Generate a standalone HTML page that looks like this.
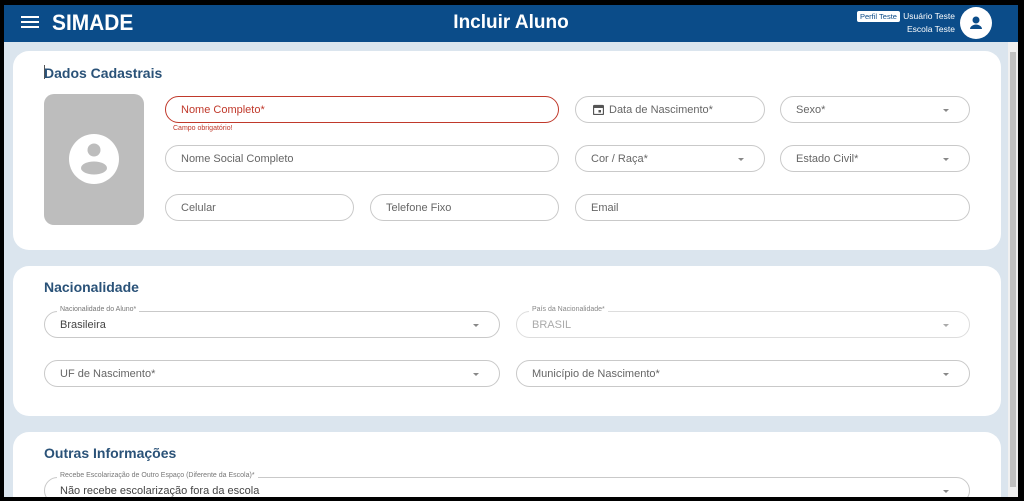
<!DOCTYPE html>
<html><head><meta charset="utf-8"><style>
*{box-sizing:border-box;margin:0;padding:0}
body{width:1024px;height:501px;background:#000;position:relative;overflow:hidden;font-family:"Liberation Sans",sans-serif}
#app{position:absolute;left:4px;top:5px;width:1014px;height:492px;background:#dbe5ee;overflow:hidden}
#hdr{position:absolute;left:0;top:0;width:1014px;height:37px;background:#0b4c89;color:#fff}
.card{position:absolute;left:9px;width:988px;background:#fff;border-radius:16px}
.t{position:absolute;font-size:14px;font-weight:bold;color:#2a5278}
.f{position:absolute;height:27px;border:1px solid #c9c9c9;border-radius:14px;font-size:11px;color:#666;padding-left:15px;line-height:26px}
.f .a{position:absolute;right:20px;top:12px;width:0;height:0;border-left:3px solid transparent;border-right:3px solid transparent;border-top:3px solid #888}
.lg{position:absolute;top:-7px;left:12px;background:#fff;padding:0 3px;font-size:7px;line-height:10px;color:#777}
.v{line-height:27px;font-size:11px;color:#444}
</style></head><body>
<div id="app">
<div id="hdr">
 <div style="position:absolute;left:17px;top:11px;width:18px;height:2px;background:#fff;box-shadow:0 5px 0 #fff,0 10px 0 #fff"></div>
 <div style="position:absolute;left:48px;top:5px;font-size:22px;font-weight:bold;transform:scaleX(0.95);transform-origin:left">SIMADE</div>
 <div style="position:absolute;left:0;width:1014px;text-align:center;top:7px;font-size:19px;font-weight:bold">Incluir Aluno</div>
 <div style="position:absolute;left:853px;top:6px;background:#fff;color:#0b4c89;font-size:7.5px;padding:1px 3px;border-radius:2px">Perfil Teste</div>
 <div style="position:absolute;right:63px;top:5px;font-size:8.5px;text-align:right;line-height:13px">Usuário Teste<br>Escola Teste</div>
 <div style="position:absolute;left:956px;top:2px;width:32px;height:32px;border-radius:50%;background:#fff">
  <svg width="32" height="32" viewBox="0 0 32 32"><circle cx="16" cy="13" r="3.5" fill="#0b4c89"/><path d="M10 22c0-3 4-4.5 6-4.5s6 1.5 6 4.5z" fill="#0b4c89"/></svg></div>
</div>
<div style="position:absolute;left:1004px;top:37px;width:10px;height:455px;background:#f0f0f0"><div style="position:absolute;left:2px;top:10px;width:6px;height:435px;background:#c1c1c1"></div></div>

<div class="card" style="top:46px;height:199px">
 <div style="position:absolute;left:31px;top:14px;width:1px;height:14px;background:#555"></div>
 <div class="t" style="left:31px;top:14px">Dados Cadastrais</div>
 <div style="position:absolute;left:31px;top:43px;width:100px;height:131px;background:#bdbdbd;border-radius:10px">
  <svg width="100" height="131" viewBox="0 0 100 131" style="position:absolute;left:0;top:0"><circle cx="50" cy="65" r="25" fill="#fff"/><circle cx="50" cy="56" r="6.5" fill="#bdbdbd"/><ellipse cx="50" cy="74" rx="13" ry="6.5" fill="#bdbdbd"/></svg></div>
 <div class="f" style="left:152px;top:45px;width:394px;border:1.5px solid #c0392b;color:#c0392b">Nome Completo*</div>
 <div style="position:absolute;left:160px;top:74px;font-size:7px;color:#c0392b">Campo obrigatório!</div>
 <div class="f" style="left:562px;top:45px;width:190px;padding-left:16px"><svg width="11" height="11" viewBox="0 0 11 11" style="position:absolute;left:17px;top:7px"><rect x="0.5" y="1.5" width="10" height="9" rx="1" fill="none" stroke="#555" stroke-width="1.3"/><rect x="0.5" y="1.5" width="10" height="2.5" fill="#555"/><rect x="5.5" y="6" width="2.5" height="2.5" fill="#555"/></svg><span style="padding-left:17px">Data de Nascimento*</span></div>
 <div class="f" style="left:767px;top:45px;width:190px">Sexo*<i class="a"></i></div>
 <div class="f" style="left:152px;top:94px;width:394px">Nome Social Completo</div>
 <div class="f" style="left:562px;top:94px;width:190px">Cor / Raça*<i class="a"></i></div>
 <div class="f" style="left:767px;top:94px;width:190px">Estado Civil*<i class="a"></i></div>
 <div class="f" style="left:152px;top:143px;width:189px">Celular</div>
 <div class="f" style="left:357px;top:143px;width:189px">Telefone Fixo</div>
 <div class="f" style="left:562px;top:143px;width:395px">Email</div>
</div>

<div class="card" style="top:261px;height:150px">
 <div class="t" style="left:31px;top:13px">Nacionalidade</div>
 <div class="f" style="left:31px;top:45px;width:456px"><span class="lg">Nacionalidade do Aluno*</span><span class="v">Brasileira</span><i class="a"></i></div>
 <div class="f" style="left:503px;top:45px;width:454px;color:#aaa;border-color:#ddd"><span class="lg" style="color:#888">País da Nacionalidade*</span><span class="v" style="color:#aaa">BRASIL</span><i class="a" style="border-top-color:#aaa"></i></div>
 <div class="f" style="left:31px;top:94px;width:456px">UF de Nascimento*<i class="a"></i></div>
 <div class="f" style="left:503px;top:94px;width:454px">Município de Nascimento*<i class="a"></i></div>
</div>

<div class="card" style="top:427px;height:90px">
 <div class="t" style="left:31px;top:13px">Outras Informações</div>
 <div class="f" style="left:31px;top:45px;width:926px"><span class="lg">Recebe Escolarização de Outro Espaço (Diferente da Escola)*</span><span class="v">Não recebe escolarização fora da escola</span><i class="a"></i></div>
</div>
</div>
</body></html>
